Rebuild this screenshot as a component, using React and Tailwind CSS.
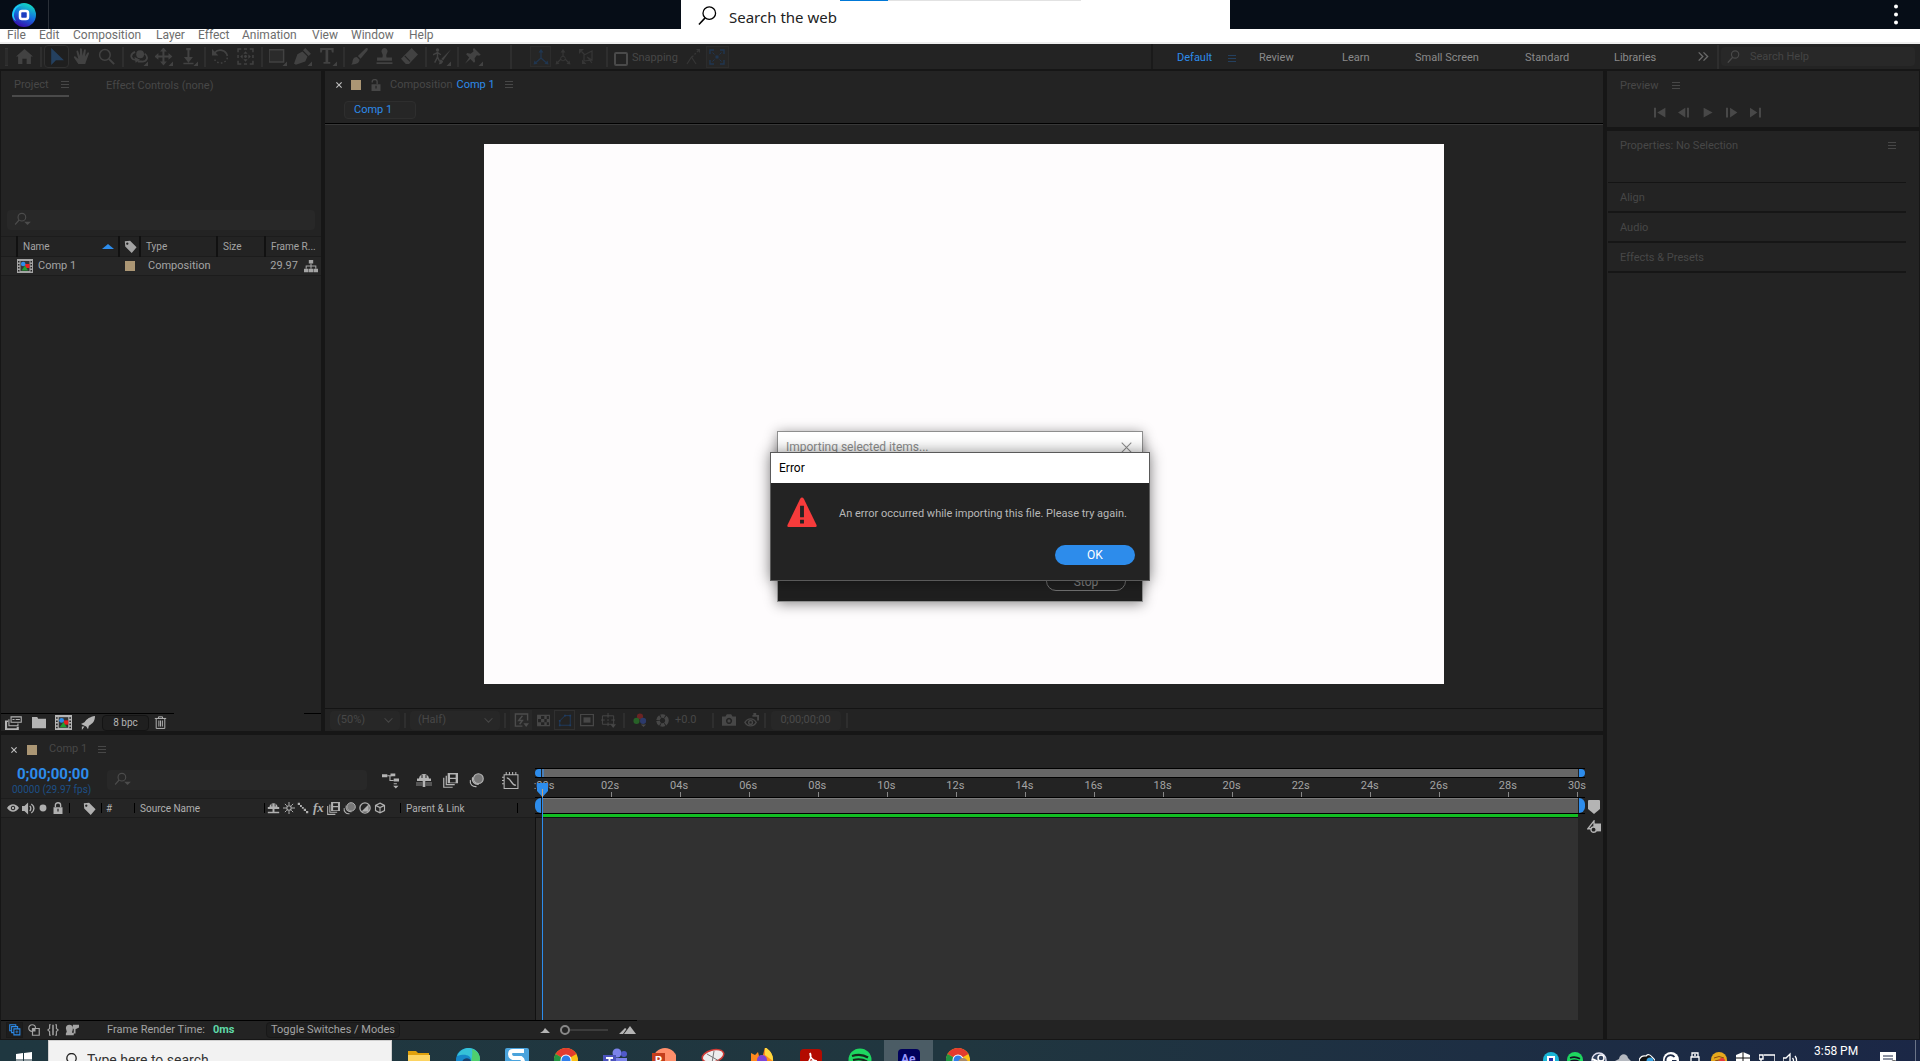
import { useState } from 'react'

const TICKS=[':00s','02s','04s','06s','08s','10s','12s','14s','16s','18s','20s','22s','24s','26s','28s','30s'];
const MENUS=[
  {l:'File',w:'w-8'},{l:'Edit',w:'w-[34px]'},{l:'Composition',w:'w-[83px]'},{l:'Layer',w:'w-[42px]'},{l:'Effect',w:'w-11'},
  {l:'Animation',w:'w-[70px]'},{l:'View',w:'w-[39px]'},{l:'Window',w:'w-[58px]'},{l:'Help',w:'w-10'},
];

// ── Icônes ───────────────────────────────────────────────────

function Ico({s=16,c='',children}){
  return <svg width={s} height={s} viewBox="0 0 16 16" fill="none" stroke="currentColor" className={'block shrink-0 '+c} aria-hidden="true">{children}</svg>;
}

const F={fill:'currentColor',stroke:'none'};

const Burger=({c='text-[#474747]'})=><svg width="8" height="8" viewBox="0 0 8 8" className={'block shrink-0 '+c} fill="currentColor" aria-hidden="true"><path d="M0 0h8v1H0zM0 3h8v1H0zM0 6h8v1H0z"/></svg>;
const Corner=()=><path {...F} d="M16 12v4h-4z"/>;
const Close=()=><Ico s={6}><path d="m1 1 14 14M15 1 1 15" strokeWidth="3"/></Ico>;
const Loupe=()=><Ico s={18} c="text-[#4c4c4c]"><circle cx="7" cy="5.5" r="3.4"/><path d="M4.6 8 1 12"/><path {...F} d="M9 9.5h6l-3 3z"/></Ico>;

const Home=()=><Ico s={17}><path {...F} d="M8 1 0 8h2v7h4v-5h4v5h4V8h2z"/></Ico>;
const Arrow=()=><Ico s={17}><path {...F} d="M3 0v16l4.500-4.500H15z"/></Ico>;
const Hand=()=><Ico s={17}><path {...F} d="M5 15 1 9.200C.3 8 1.600 7.400 2.500 8.200L5 10.300 3.300 3.700C3 2.300 4.600 2 5 3.200L6.600 7.500 6.500 1.200C6.500-.2 8.200-.2 8.400 1.200L9 7.200 10.300 2C10.700.8 12.200 1.200 12 2.500L11.400 8l2-3.400c.7-1 2-.4 1.600.8L12.500 12 11.500 15z"/></Ico>;
const Zoom=()=><Ico s={17}><circle cx="6.500" cy="6.500" r="5" strokeWidth="1.400"/><path d="m10.200 10.200 5 5" strokeWidth="1.800"/></Ico>;
const Orbit=()=><Ico s={18}><circle {...F} cx="9" cy="5.500" r="3.500"/><path d="M4.500 3.500C-1 6 1 10.500 5 10.500M13 5c4 3 2 7.500-3 7H7" strokeWidth="1.600"/><path {...F} d="m4 8 5 2.500L5 13z"/><Corner/></Ico>;
const Pan=()=><Ico s={18}><path d="M7.500 1v13M1 7.500h13" strokeWidth="1.800"/><path {...F} d="m7.500-.5 3 3.500h-6zM7.500 15.500l3-3.500h-6zM-.5 7.500l3.500-3v6zM15.500 7.500l-3.500-3v6z"/><Corner/></Ico>;
const Dolly=()=><Ico s={18}><path d="M7.500 1v9" strokeWidth="1.800"/><path {...F} d="M3.500 8h8l-4 5zM3 13h9v1.500H3zM5.500 0h4v2h-4z"/><Corner/></Ico>;
const Rotate=()=><Ico s={17}><path d="M2.500 4.500C6 .5 13 1.500 14.500 7.500" strokeWidth="1.600"/><path d="M14.500 9C13 15.500 4 16 1.500 9" strokeDasharray="1.500 2" strokeWidth="1.300"/><path {...F} d="M0 1v6h6z"/></Ico>;
const Anchor=()=><Ico s={17}><path d="M1 4V1h3M6.500 1h3M12 1h3v3M15 6.500v3M15 12v3h-3M9.500 15h-3M4 15H1v-3M1 9.500v-3" strokeWidth="1.400"/><path {...F} d="m8 3 2 2.300H6zM8 13l2-2.300H6zM3 8l2.300-2v4zM13 8l-2.300-2v4z"/><circle {...F} cx="8" cy="8" r="1.300"/></Ico>;
const Rect=()=><Ico s={18}><path d="M0 1.500h13v11H0z" fill="#2b2b2b" strokeWidth="1.300"/><Corner/></Ico>;
const Pen=()=><Ico s={18}><path {...F} d="m10 0 5 5-2 2-5-5zM7.500 3l4.500 4.500-2 4.500L1 15l4-5a1.500 1.500 0 1 1 1 1l-4.500 3.500L0 14l3-8.500z"/><Corner/></Ico>;
const TypeT=()=><Ico s={18}><path {...F} d="M1 0h12v4h-1.500L11 1.800H8.200v10.700H10V14H4v-1.500h1.800V1.800H3L2.500 4H1z"/><Corner/></Ico>;
const Brush=()=><Ico s={17}><path {...F} d="M15.500.3c.8.800 0 2-1 3.200L9 10 6.500 7.500 13 1.200c1-1 1.800-1.500 2.500-.9zM5.500 8.500 8 11c0 3.500-4 4.500-8 4.500 2-1 1-3 2-5 .6-1.300 2-2 3.500-2z"/></Ico>;
const Stamp=()=><Ico s={17}><path {...F} d="M8 0a3 3 0 0 1 2.500 4.500C9.500 6 9.500 7.500 10 9h5v3H1V9h5c.5-1.500.5-3-.5-4.500A3 3 0 0 1 8 0zM.5 13.500h15V15H.5z"/></Ico>;
const Eraser=()=><Ico s={17}><path {...F} d="m10 0 6 6-8.500 9h-3L0 10z"/><path d="m3.500 7.500 5 5" stroke="#232323"/></Ico>;
const Roto=()=><Ico s={18}><circle {...F} cx="4" cy="1.700" r="1.500"/><path d="M4 3v5L1.500 13M4 8l2 4M0 6l4-2 3 2" strokeWidth="1.300"/><path {...F} d="M16 1 9 11 7.500 9.500zM7 10l2 1.800C8.500 14 7 14.500 5 14.500c1-1 .5-3 2-4.500z"/><Corner/></Ico>;
const Pin=()=><Ico s={18}><path {...F} d="m8 0 6 6-1.500.8L10.500 6.500 8.500 9l.5 3-1 1-3.200-3.200L0 14l3.700-5.500L1 5.500l1-1 3 .5L7.500 3 7 1z"/><Corner/></Ico>;
const Axis=()=><Ico><path d="M8 9V2M8 9l-5 4.500M8 9l5 4.500" strokeWidth="1.200"/><path {...F} d="m8 0 2.500 3.500h-5zM.5 15.500l1-4 3 3.200zM15.500 15.500l-1-4-3 3.200z"/></Ico>;
const AxisWorld=()=><Ico><path d="M8 8V2M6 10l-4 4M10 10l4 4" strokeWidth="1.200"/><circle cx="8" cy="9.500" r="2.300"/><path {...F} d="m8 0 2.500 3.500h-5zM.5 15.500l1-4 3 3.200zM15.500 15.500l-1-4-3 3.200z"/></Ico>;
const AxisView=()=><Ico><path d="M2.500 2.500 6 6M5 12V6l8-4v9L8 8M5 12l8-1M9 9l4 5" strokeWidth="1.200"/><path {...F} d="M0 0h5L0 5zM3 10.500l4.500 4.500H3z"/></Ico>;
const SnapA=()=><Ico><path d="m1 15 4.500-7L10 15" strokeWidth="1.200"/><path d="m6 8 6-6" strokeDasharray="2 1.500" strokeWidth="1.300"/><path {...F} d="M10 0h4v4z"/></Ico>;
const SnapB=()=><Ico><path d="M1 5V1h4M11 1h4v4M15 11v4h-4M5 15H1v-4" strokeWidth="1.400"/><path d="m3.500 3.500 2 2M12.500 3.500l-2 2M3.500 12.500l2-2M12.500 12.500l-2-2"/><path {...F} d="M6.500 6.500h3v3h-3z"/></Ico>;

const Tag=()=><Ico s={13}><path {...F} fillRule="evenodd" d="M1 1.500 7.500 1 15.500 9l-6 7L1.500 8zM4 3a1.400 1.400 0 1 0 .1 0z"/></Ico>;
const Film=({s=16})=><Ico s={s}><path {...F} fillRule="evenodd" d="M0 1h16v14H0zM1 3v1.500h1.500V3zM1 6v1.500h1.500V6zM1 9v1.500h1.500V9zM1 12v1.500h1.500V12zM13.500 3v1.500H15V3zM13.500 6v1.500H15V6zM13.500 9v1.500H15V9zM13.500 12v1.500H15V12z"/><path d="M3.500 3h9v10h-9z" fill="#333" stroke="none"/><path d="M8 6h4.500v4H8z" fill="#e62020" stroke="none"/><circle cx="6.200" cy="6" r="2.300" fill="#2d8ceb" stroke="none"/><path d="m8 7.500 3 5H4.500z" fill="#20a030" stroke="none"/></Ico>;
const FlowIco=()=><Ico s={14}><path {...F} d="M5.500 1h5v4h-5zM0 11h5v4H0zM5.500 11h5v4h-5zM11 11h5v4h-5z"/><path d="M8 5v6M2.500 11V8h11v3" strokeWidth="1.200"/></Ico>;
const Interpret=()=><Ico s={17}><path {...F} d="M0 6h3v1.500h-1v6h9V12h2v3H0z"/><path d="M5.700 2.700h9.600v5H5.700zM3.700 5v6h8.500V9M7 5.200h2M10 5.200h4"/></Ico>;
const Folder=()=><Ico s={14}><path {...F} d="M0 1h6l1 2h9v11H0z"/></Ico>;
const Rocket=()=><Ico s={14}><path {...F} d="M16 0c0 6-3 9-7 11l-1 4-2-3-2-1-4-2 4-2C7 3 10 1 16 0zM1 12l3 0-3 4z"/></Ico>;
const Trash=()=><Ico s={13}><path d="M1 3h14M5.500 3V1h5v2M2.700 3v12.300h10.600V3M6 5.500v7.500M8 5.500v7.500M10.300 5.500v7.500" strokeWidth="1.200"/></Ico>;

const Shy=()=><Ico><path d="M0 10h6.500v4H0zM9.500 10H16v4H9.500z" fill="#555" stroke="none"/><path {...F} d="M3 6.500c.5-6 9.500-6 10 0h2V9H9.300v6H6.700V9H1V6.500z"/><path d="M6 3v3M10 3v3" stroke="#232323"/></Ico>;
const ShyCol=()=><Ico s={13}><path {...F} d="M3 6c.5-6 9.500-6 10 0h2v2.500H9.200V12H15v1.700H1V12h5.800V8.500H1V6z"/><path d="M6 2.500v3M10 2.500v3" stroke="#252525"/></Ico>;
const Tree=()=><Ico s={17}><path {...F} d="M0 2h5v3H0zM8 1.500h4.500V4H8zM11 6h5v3h-5zM11 10.500h3v1h-3zM10.500 13h5l-2.500 2.500z"/><path d="M5 3.500h4M7.500 3.500v4.500H11"/></Ico>;
const Frames=({s=15})=><Ico s={s}><path {...F} fillRule="evenodd" d="M5 0h11v11H5zM7.500 1.500v3.500h6V1.500zM7.500 6.500V10h6V6.500z"/><path d="M3.500 3v9.500h9M.8 5v10.200h9.500" strokeWidth="1.300"/></Ico>;
const Blur=({s=15})=><Ico s={s}><circle cx="10" cy="6" r="5.200" fill="#777" strokeWidth="1.200"/><path d="M4 4.500c-1.500 4.500 2 8 6.500 7.500M1.500 7.500c-1 4.500 2.500 7.500 6.500 7" strokeWidth="1.300"/></Ico>;
const Graph=()=><Ico s={17}><path d="M2 2.500h13v13H2zM4 0v2M7 0v2M10 0v2M13 0v2M0 5h2M0 8h2M0 11h2"/><path d="M4.500 5.500c4 0 4 7 8.500 7" strokeWidth="1.300"/></Ico>;
const Eye=()=><Ico s={12}><path {...F} fillRule="evenodd" d="M0 8c4-6.500 12-6.500 16 0-4 6.500-12 6.500-16 0zm8-3a3 3 0 1 0 .1 0z"/><circle {...F} cx="8" cy="8" r="1.600"/></Ico>;
const Speaker=()=><Ico s={13}><path {...F} d="M0 5h3l4.500-4.500v15L3 11H0z"/><path d="M9.500 5c1.800 1.500 1.800 4.500 0 6M11.500 2.500c4.200 3 4.200 8 0 11" strokeWidth="1.700"/></Ico>;
const Lock=({open})=><Ico s={12}><path {...F} fillRule="evenodd" d="M2 7h12v9H2zm5.200 2v3.500h1.600V9z"/><path d={open?'M3 4.500V3c0-3 6.500-3 6.500 0v4':'M4.500 7V4c0-4 7-4 7 0v3'} strokeWidth="1.800"/></Ico>;
const Sun=()=><Ico s={12}><circle cx="8" cy="8" r="3" strokeWidth="1.500"/><path d="M8 0v4M8 12v4M0 8h4M12 8h4M2.500 2.500 5 5M11 11l2.500 2.500M13.500 2.500 11 5M5 11l-2.500 2.500" strokeWidth="1.300"/></Ico>;
const Stairs=()=><Ico s={12}><path {...F} d="M1 1h3v3H1zM4 4h2.500v2.500H4zM6.500 6.500H9V9H6.500zM9 9h3v3H9zM12 12h3v3h-3z"/></Ico>;
const Half=()=><Ico s={12}><circle cx="8" cy="8" r="6.800" strokeWidth="1.800"/><path {...F} d="M13 3v10H3z"/></Ico>;
const Cube=()=><Ico s={12}><path d="m8 1.500 6 3v7l-6 3-6-3v-7zM2 4.500l6 3 6-3M8 7.500v7" strokeWidth="1.500"/></Ico>;

// ── Petits blocs ─────────────────────────────────────────────

const Sep=({c='h-5'})=><span className="flex w-[7px] shrink-0 justify-center"><span className={'w-[2px] bg-[#2e2e2e] '+c}/></span>;

function Tools({items}){
  return items.map(([nom,Icon])=><button key={nom} aria-label={nom} className={'flex h-[23px] w-[25px] shrink-0 items-center justify-center rounded-sm '+(nom==='Selection'?'border border-[#303030] bg-[#1f1f1f] text-[#24405f]':'text-[#424242]')}><Icon/></button>);
}

function Toolbar(){
  const [snap,setSnap]=useState(false);
  return <div className="flex h-[25px] shrink-0 items-center overflow-hidden bg-[#232323] text-[#474747]">
    <span className="ml-[5px] mr-1 h-[18px] w-[3px] border-y border-[#333] bg-[#2c2c2c]"/>
    <Tools items={[['Home',Home]]}/><Sep/>
    <Tools items={[['Selection',Arrow],['Hand',Hand],['Zoom',Zoom]]}/><Sep/>
    <Tools items={[['Orbit',Orbit],['Pan',Pan],['Dolly',Dolly]]}/><Sep/>
    <Tools items={[['Rotate',Rotate],['Pan Behind',Anchor]]}/><Sep/>
    <Tools items={[['Rectangle',Rect],['Pen',Pen],['Type',TypeT]]}/><Sep/>
    <Tools items={[['Brush',Brush],['Clone Stamp',Stamp],['Eraser',Eraser]]}/><Sep/>
    <Tools items={[['Roto Brush',Roto]]}/><Sep/>
    <Tools items={[['Puppet Pin',Pin]]}/>
    <span className="ml-6 h-6 w-[2px] bg-[#2e2e2e]"/>
    <button aria-label="Local axis" className="ml-[18px] flex h-[21px] w-[21px] items-center justify-center border border-[#2c2c2c] bg-[#262626] text-[#203650]"><Axis/></button>
    <button aria-label="World axis" className="ml-1 text-[#363636]"><AxisWorld/></button>
    <button aria-label="View axis" className="ml-2 mr-2 text-[#363636]"><AxisView/></button>
    <Sep/>
    <label className="ml-1 flex items-center gap-1 pt-1 text-[11px] text-[#474747]">
      <input type="checkbox" checked={snap} onChange={e=>setSnap(e.target.checked)} className="h-[14px] w-[14px] appearance-none rounded-xs border-2 border-[#4a4a4a] checked:bg-[#4a4a4a]"/>
      Snapping
    </label>
    <span className="ml-2 text-[#363636]"><SnapA/></span>
    <button aria-label="Snap options" className="ml-1 flex h-[22px] w-[23px] items-center justify-center border border-[#2c2c2c] bg-[#262626] text-[#203650]"><SnapB/></button>
    <nav className="ml-auto flex h-full items-center border-l-2 border-[#1a1a1a] pl-6 pt-1 text-[11px] text-[#8a8a8a]">
      <button className="w-[51px] text-left text-[#2d8ceb]">Default</button><span className="w-[31px]"><Burger c="text-[#24405f]"/></span>
      <button className="w-[83px] text-left">Review</button>
      <button className="w-[73px] text-left">Learn</button>
      <button className="w-[110px] text-left">Small Screen</button>
      <button className="w-[89px] text-left">Standard</button>
      <button className="w-[84px] text-left">Libraries</button>
      <button aria-label="More workspaces" className="w-4 pb-1 text-[#6a6a6a]"><Ico s={11}><path d="m1 2 6 6-6 6M8 2l6 6-6 6" strokeWidth="2"/></Ico></button>
    </nav>
    <Sep c="h-6"/>
    <div className="mr-[5px] flex h-[19px] w-[194px] items-center rounded-sm bg-[#282828] pl-[6px]">
      <Ico s={13} c="text-[#4a4a4a]"><circle cx="10" cy="5.500" r="4.500" strokeWidth="1.400"/><path d="m7 9-6 6.500" strokeWidth="1.600"/></Ico>
      <input aria-label="Search Help" placeholder="Search Help" className="ml-[10px] w-full bg-transparent pt-[2px] text-[11px] placeholder:text-[#444]"/>
    </div>
  </div>;
}

// ── Panneau Project ──────────────────────────────────────────

function Project(){
  const th='border-r-2 border-[#111] text-left font-normal';
  return <section className="flex w-[320px] shrink-0 flex-col bg-[#232323]">
    <div className="flex h-[26px] shrink-0 items-stretch pl-[11px] text-[11px] text-[#474747]">
      <button className="flex w-[57px] items-center justify-between border-b-2 border-[#4a4a4a] pl-[2px] pt-1">Project<Burger/></button>
      <button className="ml-[37px] pt-1">Effect Controls (none)</button>
    </div>
    <div className="mx-[6px] mt-[113px] flex h-5 items-center rounded-sm bg-[#282828] pl-[7px]">
      <Loupe/><input aria-label="Search project" className="w-full bg-transparent text-[11px] text-[#aaa]"/>
    </div>
    <table className="mt-[6px] w-full table-fixed border-t border-[#1c1c1c] text-[#a4a4a4]">
      <colgroup><col className="w-4"/><col className="w-[102px]"/><col className="w-[21px]"/><col className="w-[77px]"/><col className="w-12"/><col className="w-[33px]"/><col/></colgroup>
      <thead><tr className="h-5 text-[10px] leading-3">
        <th className={th}/>
        <th className={th+' pl-[5px]'}><span className="flex items-center justify-between pr-1">Name<svg width="12" height="5" viewBox="0 0 12 5" aria-hidden="true"><path d="M6 0l6 5H0z" fill="#2d8ceb"/></svg></span></th>
        <th className={th+' pl-1'}><Tag/></th>
        <th className={th+' pl-[5px]'}>Type</th>
        <th className={th+' pl-[5px]'}>Size</th>
        <th colSpan={2} className="whitespace-nowrap pl-[5px] text-left font-normal">Frame R...</th>
      </tr></thead>
      <tbody><tr className="h-[19px] border-y border-[#1c1c1c] bg-[#262626] text-[11px] leading-4">
        <td/>
        <td><span className="flex items-center gap-[5px]"><Film/>Comp 1</span></td>
        <td className="pl-[6px]"><span className="block h-[10px] w-[10px] bg-[#ab9674]"/></td>
        <td className="pl-2">Composition</td>
        <td/>
        <td className="text-right">29.97</td>
        <td className="pl-[6px]"><FlowIco/></td>
      </tr></tbody>
    </table>
    <div className="mt-auto flex justify-between"><span className="h-px w-[173px] bg-black"/><span className="h-px w-[17px] bg-black"/></div>
    <div className="flex h-[17px] shrink-0 items-center pl-1 text-[#b4b4b4]">
      <button aria-label="Interpret Footage" className="w-[27px]"><Interpret/></button>
      <button aria-label="New Folder" className="w-[23px]"><Folder/></button>
      <button aria-label="New Composition" className="w-[26px]"><Film s={17}/></button>
      <button aria-label="Project Settings" className="w-[21px]"><Rocket/></button>
      <button className="h-4 w-[47px] rounded-sm border border-[#141414] bg-[#1f1f1f] text-[10px] leading-3">8 bpc</button>
      <button aria-label="Delete" className="ml-[5px]"><Trash/></button>
    </div>
  </section>;
}

// ── Panneau Composition ──────────────────────────────────────

function Viewer(){
  const chev=<Ico s={9} c="pointer-events-none -ml-4"><path d="m1 4 7 7 7-7" strokeWidth="1.800"/></Ico>;
  return <section className="flex min-w-0 flex-1 flex-col bg-[#232323]">
    <div className="flex h-7 shrink-0 items-center pl-[11px] text-[11px] text-[#474747]">
      <button aria-label="Close tab" className="text-[#c0c0c0]"><Close/></button>
      <span className="ml-[9px] mr-[9px] h-[10px] w-[10px] bg-[#ab9674]"/>
      <Lock open/>
      <span className="ml-2">Composition</span><span className="ml-1 mr-[10px] text-[#2d8ceb]">Comp 1</span><Burger/>
    </div>
    <div className="flex h-[25px] shrink-0 items-start border-b border-black pl-[19px] pt-[2px]">
      <button className="h-[18px] w-[72px] rounded-sm border border-[#2e2e2e] bg-[#262626] pl-[9px] text-left text-[11px] leading-4 text-[#2d8ceb]">Comp 1</button>
    </div>
    <div className="flex min-h-0 flex-1 items-start justify-center border-t border-[#383838] pt-[19px]">
      <div className="aspect-video w-[960px] max-w-full bg-[#fefcfd]"/>
    </div>
    <div className="flex h-[23px] shrink-0 items-center border-t border-[#141414] pl-[5px] text-[11px] text-[#474747]">
      <select aria-label="Magnification" className="h-[19px] w-[70px] appearance-none rounded-sm bg-[#272727] pl-[7px]"><option>(50%)</option></select>{chev}<span className="w-[7px]"/>
      <span className="mx-1 h-[15px] w-[2px] bg-[#2e2e2e]"/>
      <select aria-label="Resolution" className="h-[19px] w-[90px] appearance-none rounded-sm bg-[#272727] pl-2"><option>(Half)</option></select>{chev}<span className="w-[7px]"/>
      <span className="mx-1 h-[15px] w-[2px] bg-[#2e2e2e]"/>
      <button aria-label="Fast Previews" className="flex h-5 w-[22px] items-center justify-center bg-[#282828] text-[#4c4c4c]"><Ico s={15}><path d="M14.500 8V1h-13v13H9M9 3 5 8h4l-3 4" strokeWidth="1.500"/><path {...F} d="M10 11h6l-3 4z"/></Ico></button>
      <button aria-label="Transparency Grid" className="flex w-[22px] justify-center"><Ico s={13}><path d="M.7 1.700h14.600v12.600H.7z" strokeWidth="1.300"/><path {...F} d="M1 2h4v4H1zM9 2h3v4H9zM5 6h4v4H5zM12 6h3v4h-3zM1 10h4v4H1zM9 10h3v4H9z"/></Ico></button>
      <button aria-label="Mask Visibility" className="flex h-5 w-[21px] items-center justify-center border border-[#303030] text-[#1f3d62]"><Ico s={14}><path d="M2 14h12V3H8L2 9z"/><path {...F} d="M1 13h2v2H1zM13 13h2v2h-2zM13 2h2v2h-2zM7 2h2v2H7zM1 8h2v2H1z"/></Ico></button>
      <button aria-label="Region of Interest" className="flex w-6 justify-center"><Ico s={14}><path d="M.7 1.700h14.600v12.600H.7z" strokeWidth="1.400"/><path {...F} d="M4 5h8v6H4z"/></Ico></button>
      <button aria-label="Guides" className="flex w-[18px] justify-center"><Ico s={15}><path d="M1.500 3h12v9h-12zM7.500 0v5M7.500 10v4M0 7.500h4M11 7.500h4M6.500 7.500h2"/><path {...F} d="M10 12h6l-3 4z"/></Ico></button>
      <span className="ml-[6px] mr-1 h-[15px] w-[2px] bg-[#2e2e2e]"/>
      <button aria-label="Channels" className="flex w-[22px] justify-center"><Ico s={14}><g stroke="none"><circle cx="8" cy="4" r="3.500" fill="#6b2424"/><circle cx="4" cy="9" r="3.500" fill="#276127"/><circle cx="11.500" cy="9" r="3.500" fill="#2c3a6b"/></g><path {...F} d="M9 13h6l-3 3z"/></Ico></button>
      <button aria-label="Reset Exposure" className="flex w-[22px] justify-center"><Ico s={13}><circle cx="8" cy="8" r="5.500" strokeWidth="4.500" strokeDasharray="4.800 1"/></Ico></button>
      <span className="ml-[2px]">+0.0</span>
      <span className="ml-[15px] h-[15px] w-[2px] bg-[#2e2e2e]"/>
      <button aria-label="Snapshot" className="ml-2"><Ico s={14}><path {...F} fillRule="evenodd" d="M0 4h4l1.500-2.500h5L12 4h4v10.500H0zm8 1.500a3.500 3.500 0 1 0 .1 0z"/><circle {...F} cx="8" cy="9" r="1.800"/></Ico></button>
      <button aria-label="Show Snapshot" className="ml-2"><Ico s={15}><path d="M1 10c3-5 9-5 12 0-3 5-9 5-12 0z" strokeWidth="1.500"/><circle cx="7" cy="10" r="2" strokeWidth="1.500"/><path d="M9 3h6v5M10 1h3" strokeWidth="2"/></Ico></button>
      <span className="mx-[5px] h-[15px] w-[2px] bg-[#2e2e2e]"/>
      <button className="h-[19px] w-[70px] rounded-sm bg-[#272727] text-[#4a4a4a]">0;00;00;00</button>
      <span className="mx-[5px] h-[15px] w-[2px] bg-[#2e2e2e]"/>
    </div>
  </section>;
}

// ── Timeline ─────────────────────────────────────────────────

function Timeline(){
  const [zoom,setZoom]=useState(0);
  const bar=<span className="h-[10px] w-px shrink-0 bg-black"/>;
  return <section className="flex h-[304px] shrink-0 flex-col bg-[#232323]">
    <div className="flex h-[33px] shrink-0 items-center pb-1 pl-[10px] text-[11px] text-[#474747]">
      <button aria-label="Close timeline" className="text-[#c0c0c0]"><Close/></button>
      <span className="ml-[10px] mr-3 h-[10px] w-[10px] bg-[#ab9674]"/><span className="w-[49px]">Comp 1</span><Burger/>
    </div>
    <div className="flex min-h-0 flex-1">
      <div className="flex w-[534px] shrink-0 flex-col">
        <div className="flex h-[30px] shrink-0">
          <div className="w-[106px] pl-[11px]">
            <div className="whitespace-nowrap pl-[5px] text-[15px] font-bold leading-3 text-[#2d8ceb]">0;00;00;00</div>
            <div className="whitespace-nowrap pt-1 text-[10px] leading-3 text-[#1d4f85]">00000 (29.97 fps)</div>
          </div>
          <div className="mt-[2px] flex h-5 w-[260px] items-center rounded-sm bg-[#282828] pl-[7px]"><Loupe/><input aria-label="Search layers" className="w-full bg-transparent text-[11px] text-[#aaa]"/></div>
          <div className="ml-[15px] flex h-6 items-center text-[#b4b4b4]">
            <button aria-label="Mini-Flowchart" className="w-[34px]"><Tree/></button>
            <button aria-label="Hide Shy Layers" className="w-[27px]"><Shy/></button>
            <button aria-label="Frame Blending" className="w-[26px]"><Frames/></button>
            <button aria-label="Motion Blur" className="w-[33px]"><Blur/></button>
            <button aria-label="Graph Editor"><Graph/></button>
          </div>
        </div>
        <div className="flex h-5 shrink-0 items-center border-y border-[#1c1c1c] bg-[#252525] pl-[6px] text-[10px] text-[#b0b0b0]">
          <span className="w-[15px]"><Eye/></span><span className="w-4"><Speaker/></span><span className="w-[14px]"><Ico s={10}><circle {...F} cx="8" cy="8" r="5.500"/></Ico></span><span className="w-[17px]"><Lock/></span>{bar}
          <span className="ml-[13px] w-[18px]"><Tag/></span>{bar}
          <span className="w-8 pl-[4px]">#</span>{bar}
          <span className="w-[129px] pl-[5px]">Source Name</span>{bar}
          <span className="ml-[2px] flex items-center"><span className="w-4"><ShyCol/></span><span className="w-[14px]"><Sun/></span><span className="w-4"><Stairs/></span><span className="w-[14px] font-[Liberation_Serif] text-[13px] font-bold italic leading-3">fx</span><span className="w-4"><Frames s={13}/></span><span className="w-4"><Blur s={13}/></span><span className="w-[15px]"><Half/></span><span className="w-[26px]"><Cube/></span></span>
          <span className="mr-[5px] h-[10px] w-px bg-black"/><span className="w-[111px]">Parent &amp; Link</span>{bar}
        </div>
      </div>
      <div className="relative flex min-w-0 flex-1 flex-col">
        <div className="flex h-[10px] shrink-0 border-y border-black">
          <span className="mr-px w-[6px] rounded-l-full bg-[#2d8ceb]"/><span className="flex-1 border-l-2 border-[#4a7fb8] bg-[#666]"/><span className="ml-px w-[6px] rounded-r-full bg-[#2d8ceb]"/>
        </div>
        <div className="flex h-[19px] shrink-0 justify-between px-[7px] text-[11px] leading-4 text-[#a4a4a4]">
          {TICKS.map((t,i)=><span key={t} className="flex w-0 flex-col items-center whitespace-nowrap"><span className={i===0?'h-[14px] pl-1':'h-[14px] pr-[2px]'}>{t}</span><span className="h-[5px] w-px bg-[#888]"/></span>)}
        </div>
        <div className="flex h-[17px] shrink-0 border-y border-black">
          <span className="mr-px w-[6px] rounded-l-md bg-[#2d8ceb]"/><span className="flex-1 border-t border-[#7a7a7a] bg-[#5f5f5f]"/><span className="ml-px w-[6px] rounded-r-md bg-[#2d8ceb]"/>
        </div>
        <div className="mx-[7px] h-[3px] shrink-0 bg-[#12bd22]"/>
        <div className="mr-[7px] flex-1 border-l border-t border-[#111] bg-[#2a2a2a] pl-[6px]"><div className="h-full bg-[#313131]"/></div>
        <div className="absolute bottom-0 left-px top-[15px] flex w-[13px] flex-col items-center">
          <svg width="13" height="14" viewBox="0 0 13 14" className="block shrink-0" aria-hidden="true"><path d="M1 0h11v8l-5.500 6L1 8z" fill="#2d8ceb"/><path d="M6.500 6v8" stroke="#c9a37a"/></svg>
          <span className="w-px flex-1 bg-[#2d8ceb]"/>
        </div>
      </div>
      <div className="flex w-[18px] shrink-0 flex-col items-center gap-[6px] pr-px pt-8 text-[#b4b4b4]">
        <svg width="12" height="14" viewBox="0 0 12 14" aria-hidden="true"><path d="M0 1q0-1 1-1h10q1 0 1 1v8l-6 5-6-5z" fill="currentColor"/></svg>
        <Ico s={14}><path {...F} d="M8 4h8v9H8z"/><path d="m8 1-7 9h7z" strokeWidth="1.500"/><circle cx="7.500" cy="11" r="3" fill="#232323" strokeWidth="1.500"/></Ico>
      </div>
    </div>
    <div className="mr-[966px] h-px shrink-0 bg-black"/>
    <div className="flex h-[18px] shrink-0 items-center pl-[5px] text-[11px] text-[#a4a4a4]">
      <button aria-label="Layer Switches" className="flex h-4 w-[17px] items-center justify-center border border-[#1a1a1a] bg-[#1d1d1d] text-[#2d8ceb]"><Ico s={12}><path d="M1 1h8v8H1z" strokeWidth="1.400"/><path d="M3.500 3.500h8v8h-8z" fill="#1d1d1d" strokeWidth="1.400"/><path d="M6.500 6.500h8v8h-8z" fill="#1d1d1d" strokeWidth="1.400"/><path d="M8.500 10.500h4M10.500 8.500v4"/></Ico></button>
      <button aria-label="Transfer Controls" className="ml-[5px]"><Ico s={12}><circle cx="5.500" cy="5.500" r="4.500" strokeWidth="1.500"/><path d="M6 6h9v9H6z" fill="#232323" strokeWidth="1.600"/><path {...F} d="M6 6h4v4H6z"/></Ico></button>
      <button aria-label="In and Out" className="ml-[7px]"><Ico s={12}><path d="M5 1H3.500v5L1 8l2.500 2v5H5M11 1h1.500v5L15 8l-2.500 2v5H11" strokeWidth="1.500"/><path d="M8 1v14" strokeWidth="2"/></Ico></button>
      <button aria-label="Render Time" className="ml-[6px]"><Ico s={14}><path {...F} d="M1 6a4 4 0 0 1 8 0c0 3-1 3.500-1 5h2v3H1v-2l1-2zM9 2h7v3l-4 2v5h-2V7L9 6z"/></Ico></button>
      <span className="ml-7 w-[106px]">Frame Render Time:</span><span className="w-[53px] font-bold text-[#5fd9a8]">0ms</span>
      <button className="h-4 w-[134px] rounded-sm border border-[#181818] bg-[#1f1f1f] text-[11px] leading-3">Toggle Switches / Modes</button>
      <svg width="10" height="5" viewBox="0 0 10 5" className="ml-[140px]" aria-hidden="true"><path d="m0 5 3-2 2-3 5 5z" fill="#b4b4b4"/></svg>
      <input type="range" aria-label="Timeline zoom" min="0" max="100" value={zoom} onChange={e=>setZoom(e.target.value)}
        className="ml-[10px] mr-[11px] h-3 w-12 appearance-none bg-[linear-gradient(#3c3c3c,#3c3c3c)] bg-[length:100%_2px] bg-center bg-no-repeat [&::-webkit-slider-thumb]:h-[10px] [&::-webkit-slider-thumb]:w-[10px] [&::-webkit-slider-thumb]:appearance-none [&::-webkit-slider-thumb]:rounded-full [&::-webkit-slider-thumb]:border-2 [&::-webkit-slider-thumb]:border-[#888] [&::-webkit-slider-thumb]:bg-[#232323]"/>
      <svg width="17" height="8" viewBox="0 0 17 8" aria-hidden="true"><path d="m0 8 6-6 1.500 1L4 8zM5 8l6-8 6 8z" fill="#b4b4b4"/></svg>
    </div>
  </section>;
}

// ── Colonne de droite ────────────────────────────────────────

function Side(){
  return <aside className="flex w-[312px] shrink-0 flex-col gap-1 text-[11px] text-[#474747]">
    <section className="h-14 bg-[#232323] pl-[13px] pt-[7px]">
      <div className="flex h-4 items-center gap-[14px]">Preview<Burger/></div>
      <div className="flex gap-[11px] pl-[34px] pt-3 text-[#484848]">
        <button aria-label="First Frame"><Ico s={13}><path {...F} d="M0 2h2.500v12H0zM14 2v12L4 8z"/></Ico></button>
        <button aria-label="Previous Frame"><Ico s={13}><path {...F} d="M9 2v12L0 8zM11 2h2.500v12H11z"/></Ico></button>
        <button aria-label="Play"><Ico s={13}><path {...F} d="m2 2 11 6-11 6z"/></Ico></button>
        <button aria-label="Next Frame"><Ico s={13}><path {...F} d="M0 2h2.500v12H0zM5 2l9 6-9 6z"/></Ico></button>
        <button aria-label="Last Frame"><Ico s={13}><path {...F} d="m0 2 9 6-9 6zM11 2h2.500v12H11z"/></Ico></button>
      </div>
    </section>
    <section className="flex-1 bg-[#232323] pl-px pr-[13px]">
      <div className="flex h-[52px] items-start justify-between border-b border-[#141414] pl-3 pr-[10px] pt-[7px]"><span className="leading-4">Properties: No Selection</span><span className="pt-1"><Burger/></span></div>
      {['Align','Audio','Effects & Presets'].map(t=><button key={t} className="block h-[30px] w-full border-b-2 border-[#161616] pl-3 pt-[2px] text-left">{t}</button>)}
    </section>
  </aside>;
}

// ── Boîtes de dialogue ───────────────────────────────────────

function Dialogs(){
  return <>
    <div role="dialog" aria-label="Importing selected items" className="absolute inset-x-0 top-[431px] mx-auto flex h-[171px] w-[366px] flex-col justify-between border border-[#8e8e8e] bg-[#1f1f1f] shadow-[0_2px_12px_rgba(0,0,0,0.45)]">
      <div className="flex h-[30px] items-center justify-between bg-white pl-2 pr-[10px] text-[12px] text-[#8e8e8e]">Importing selected items...<button aria-label="Close"><Ico s={11}><path d="m1 1 14 14M15 1 1 15" strokeWidth="1.500"/></Ico></button></div>
      <button className="mb-[10px] mr-4 h-5 w-20 self-end rounded-full border border-[#707070] pt-px text-[12px] leading-4 text-[#808080]">Stop</button>
    </div>
    <div role="alertdialog" aria-label="Error" className="absolute inset-x-0 top-[452px] mx-auto h-[129px] w-[380px] border border-[#5a5a5a] bg-[#232323] shadow-[0_0_14px_rgba(0,0,0,0.45)]">
      <div className="flex h-[30px] items-center bg-white pl-2 text-[12px] text-black">Error</div>
      <div className="flex h-[62px] items-center gap-[22px] pl-4 text-[11px] text-[#b8b8b8]">
        <svg width="30" height="30" viewBox="0 0 31 31" className="mb-1 shrink-0" aria-hidden="true"><path d="M13.500 2q2-3 4 0l13 27q.5 2-1 2h-28q-1.500 0-1-2z" fill="#f63b3b"/><path d="M13.500 9h4v12h-4zM13.500 23.500h4v4h-4z" fill="#232323"/></svg>
        <span className="whitespace-nowrap">An error occurred while importing this file. Please try again.</span>
      </div>
      <button className="ml-auto mr-[14px] block h-5 w-20 rounded-full bg-[#2d8ceb] text-[12px] leading-5 text-white">OK</button>
    </div>
  </>;
}

// ── Barre des tâches ─────────────────────────────────────────

const Chrome=()=><><circle cx="12" cy="12" r="12" fill="#fbc116"/><path d="M12 12 1.600 6A12 12 0 0 1 22.400 6z" fill="#e33b2e"/><path d="M12 12 1.600 6A12 12 0 0 0 12 24z" fill="#229342"/><circle cx="12" cy="12" r="5.500" fill="#fff"/><circle cx="12" cy="12" r="4.500" fill="#2f7de9"/></>;
const APPS=[
  {n:'File Explorer',d:<><path d="M1 3h8l2 2h11v18H1z" fill="#e0a10c"/><path d="M1 7h22v16H1z" fill="#fcd462"/></>},
  {n:'Edge',d:<><circle cx="12" cy="12" r="12" fill="#1687c9"/><path d="M11 0C22-1 25 9 23 13c-2 4-7 3-8 1 1-7-6-9-14-6Q4 1 11 0z" fill="#35c1d8"/><path d="M16 1q8 3 8 10c0 4-5 5-9 3q2-8 1-13z" fill="#4fcf6e"/><path d="M6 15c0-6 9-6 9-1 2 2 4 2 7 1-2 6-14 9-16 0z" fill="#17416d"/></>},
  {n:'Snagit',d:<><rect width="24" height="24" rx="2" fill="#4aa3dc"/><path d="M19 3H8Q5 3 5 6t3 4h8q2 1 2 4" fill="none" stroke="#fff" strokeWidth="4"/></>},
  {n:'Chrome',d:<Chrome/>},
  {n:'Teams',d:<><circle cx="14" cy="5" r="4.500" fill="#7b83eb"/><circle cx="21" cy="6" r="3" fill="#5059c9"/><path d="M8 10h16v8H8z" fill="#7b83eb"/><rect y="7" width="13" height="13" fill="#4b53bc"/><path d="M3 10h7M6.500 10v8" stroke="#fff" strokeWidth="2"/></>},
  {n:'PowerPoint',d:<><circle cx="13" cy="12" r="12" fill="#ff8f6b"/><rect y="5" width="13" height="13" fill="#c43e1c"/><text x="3" y="16" fontSize="11" fontWeight="bold" fill="#fff">P</text></>},
  {n:'Snipping Tool',d:<><ellipse cx="12" cy="8" rx="11" ry="6" fill="#eee" stroke="#cf3a35" strokeWidth="1.500" transform="rotate(-15 12 8)"/><path d="m6 6 12 7M13 3l-2 12" stroke="#777"/></>},
  {n:'Firefox',d:<><path d="M1 5l4 2 3-3 1 4 4-1 2-8q9 6 8 15T12 24 1 15z" fill="#ff8a1f"/><path d="M15-1q9 6 8 14l-8-6z" fill="#ffd83d"/><circle cx="12" cy="12" r="5" fill="#7c45d8"/></>},
  {n:'Acrobat',d:<><rect x="1" y="1" width="22" height="23" rx="4" fill="#b30b00"/><path d="M11 5q3 5-5 13M11 5q0 7 7 8-6-1-11 3" fill="none" stroke="#fff" strokeWidth="1.500"/></>},
  {n:'Spotify',d:<><circle cx="12" cy="12" r="11.500" fill="#1ed760"/><path d="M4 8q9-3 16 1.500M5 12q8-2 14 1.500" fill="none" stroke="#152a1c" strokeWidth="2.200"/></>},
  {n:'After Effects',d:<><rect x="1" y="1" width="22" height="22" rx="4" fill="#00005b"/><text x="4" y="15" fontSize="12" fontWeight="bold" fill="#9999ff">Ae</text></>},
  {n:'Chrome profile',d:<><Chrome/><circle cx="17" cy="15" r="5" fill="#a88a6a"/></>},
];
const TRAY=[
  {n:'Capture',d:<><circle cx="8" cy="8" r="8" fill="#1bb7d8"/><path d="M5 5h6v6H5z" fill="#2333a8" stroke="#fff" strokeWidth="2"/></>},
  {n:'Spotify',d:<><circle cx="8" cy="8" r="8" fill="#1ed760"/><path d="M3 6q5-2 10 .8M3.500 9q5-1.500 9 .8" fill="none" stroke="#112" strokeWidth="1.600"/></>},
  {n:'Steam',d:<><circle cx="8" cy="8" r="7" fill="#30415e" stroke="#dde" strokeWidth="1.400"/><circle cx="10" cy="6" r="3" fill="none" stroke="#fff" strokeWidth="1.500"/><path d="m1 7 7 3" stroke="#fff" strokeWidth="2"/></>},
  {n:'OneDrive',d:<path d="M0 12V9l4-2c1-6 8-6 9-1l3 3v3z" fill="#b5b9c0"/>},
  {n:'Sync',d:<><path d="M0 8q2-5 7-4 3-3 6 1l3 3v5H2z" fill="#111" stroke="#fff" strokeWidth="1.200"/><circle cx="11" cy="9" r="3.500" fill="#3aa0e0"/></>},
  {n:'Grammarly',d:<><circle cx="8" cy="8" r="8" fill="#fff"/><path d="M11.500 5a5 5 0 1 0 1 4H9" fill="none" stroke="#1e2c48" strokeWidth="1.800"/></>},
  {n:'USB',d:<path d="M5 1h6v4H5zM4 5h8v10H4zM7 3h2" fill="none" stroke="#fff" strokeWidth="1.300"/>},
  {n:'Updater',d:<><circle cx="8" cy="8" r="8" fill="#e6a91d"/><path d="M3 6q5-3 10 0M4 9q4-2 8 0" fill="none" stroke="#8c4a12"/><circle cx="11" cy="9" r="3" fill="#e53b3b"/></>},
  {n:'Security',d:<><path d="m8 0 7 3v6q-2 5-7 7-5-2-7-7V3z" fill="#fff"/><path d="M8 0v16M1 6h14" stroke="#111"/></>},
  {n:'Network',d:<path d="M5 3h11v9H4M0 3h4v4H0zM2 7v8" fill="none" stroke="#fff" strokeWidth="1.400"/>},
  {n:'Volume',d:<path d="M0 6h3l4-4v13l-4-4H0zM9.500 6q2 2.500 0 5M12 4q3 4 0 8" fill="none" stroke="#fff" strokeWidth="1.300"/>},
];

function Taskbar(){
  return <footer className="flex h-[21px] shrink-0 items-start overflow-hidden bg-linear-to-r from-[#1f3740] via-[#20363f] to-[#1b2746]">
    <button aria-label="Start" className="flex h-10 w-12 shrink-0 items-center justify-center"><svg width="16" height="16" viewBox="0 0 16 16" fill="#fff" aria-hidden="true"><path d="m0 2 7-1v6.500H0zM8 1l8-1v7.500H8zM0 8.500h7V15l-7-1zM8 8.500h8V16l-8-1z"/></svg></button>
    <label className="flex h-10 w-[344px] shrink-0 items-center border border-[#d0d0d0] bg-[#f2f2f2] pl-[15px] text-[#222]">
      <Ico s={15}><circle cx="8" cy="5.500" r="5" strokeWidth="1.400"/><path d="m5 9.500-4 6" strokeWidth="1.400"/></Ico>
      <input aria-label="Type here to search" placeholder="Type here to search" className="ml-2 w-full bg-transparent text-[14px] placeholder:text-[#333]"/>
    </label>
    <div className="ml-[2px] flex">
      {APPS.map(a=><button key={a.n} aria-label={a.n} className={'flex h-10 w-[49px] items-center justify-center '+(a.n==='After Effects'?'bg-[#4b5c65]':'')}><svg width="24" height="24" viewBox="0 0 24 24" aria-hidden="true">{a.d}</svg></button>)}
    </div>
    <div className="ml-auto flex items-center">
      <div className="flex h-10 items-center gap-2">{TRAY.map(t=><button key={t.n} aria-label={t.n}><svg width="16" height="16" viewBox="0 0 16 16" className="block" aria-hidden="true">{t.d}</svg></button>)}</div>
      <time className="ml-[15px] w-[66px] self-start pt-[3px] text-[12px] leading-4 text-white">3:58 PM</time>
      <button aria-label="Notifications" className="mr-[18px]"><svg width="17" height="16" viewBox="0 0 17 16" className="block" aria-hidden="true"><path d="M0 0h16v12H8l-3 3v-3H0z" fill="#fff"/><path d="M3 4h10M3 7h10" stroke="#1b2746"/><circle cx="14" cy="11" r="3" fill="#666"/></svg></button>
      <span className="mr-1 h-10 w-px bg-[#6b7488]"/>
    </div>
  </footer>;
}

// ── App ──────────────────────────────────────────────────────

export default function App(){
  return <div className="relative flex h-screen w-full flex-col overflow-hidden bg-[#161616] font-[Roboto,sans-serif]">
    <header className="flex h-[29px] shrink-0 bg-[#060d17] pr-[9px]">
      <div className="flex flex-1"><div className="flex w-[49px] items-center justify-center border-r border-[#2a3038]">
        <svg width="24" height="24" viewBox="0 0 24 24" aria-hidden="true">
          <defs><linearGradient id="lg" x1="0.7" y1="0" x2="0.3" y2="1"><stop offset="0" stopColor="#12dfc0"/><stop offset="0.5" stopColor="#1470e0"/><stop offset="1" stopColor="#3a06a8"/></linearGradient></defs>
          <circle cx="12" cy="12" r="12" fill="url(#lg)"/><path d="M4 18A10 10 0 0 1 12 2Q2 0 0 12q1 5 4 6z" fill="#1bd0f5"/>
          <rect x="8" y="8" width="8" height="8" rx="2" fill="#1d3fc0" stroke="#fff" strokeWidth="2.500"/>
        </svg>
      </div></div>
      <div className="w-[549px] bg-white">
        <div className="ml-[159px] flex h-px w-[241px] bg-[#e2e2e2]"><span className="w-12 bg-[#0078d7]"/></div>
        <label className="flex h-7 items-center pl-[17px] text-black">
          <Ico s={19}><circle cx="9.500" cy="6" r="5.300" strokeWidth="1.100"/><path d="M6 10 .8 15.500" strokeWidth="1.300"/></Ico>
          <input aria-label="Search the web" placeholder="Search the web" className="ml-3 h-6 w-full bg-transparent pt-1 font-[Noto_Sans,sans-serif] text-[15px] placeholder:text-[#222]"/>
        </label>
      </div>
      <div className="flex flex-1 items-center justify-end"><button aria-label="More options" className="mr-[13px]"><svg width="4" height="21" viewBox="0 0 4 21" fill="#fff" className="block" aria-hidden="true"><circle cx="2" cy="2.500" r="2"/><circle cx="2" cy="10.500" r="2"/><circle cx="2" cy="18.500" r="2"/></svg></button></div>
    </header>
    <nav className="flex h-[15px] shrink-0 items-center border-b-2 border-[#eee] bg-white pb-px pl-[7px] text-[12px] leading-3 text-[#6d6d6d]">
      {MENUS.map(m=><button key={m.l} className={'shrink-0 text-left '+m.w}>{m.l}</button>)}
    </nav>
    <Toolbar/>
    <main className="flex min-h-0 flex-1 gap-1 px-px pb-px pt-[2px]">
      <div className="flex min-w-0 flex-1 flex-col gap-1">
        <div className="flex min-h-0 flex-1 gap-1"><Project/><Viewer/></div>
        <Timeline/>
      </div>
      <Side/>
    </main>
    <Dialogs/>
    <Taskbar/>
  </div>;
}
